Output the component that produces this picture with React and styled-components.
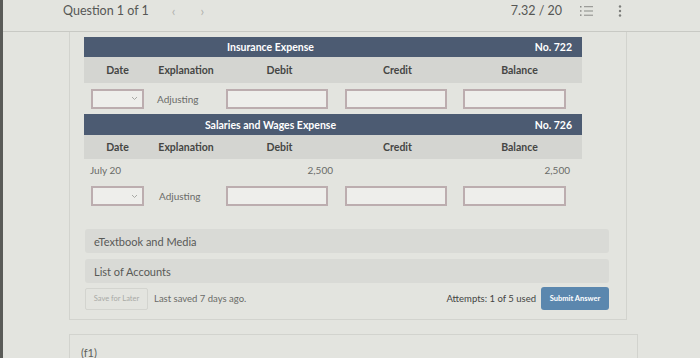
import React from 'react';
import styled, { createGlobalStyle } from 'styled-components';

const GlobalStyle = createGlobalStyle`
  html, body {
    margin: 0;
    padding: 0;
    background: #e3e4df;
    font-family: Lato, "Noto Sans", sans-serif;
  }
`;

const Page = styled.div`
  height: 358px;
  border-left: 3px solid #5a5b58;
  overflow: hidden;
`;

const TopBar = styled.div`
  box-sizing: border-box;
  height: 32px;
  padding-top: 3px;
  display: flex;
  align-items: flex-start;
  line-height: 16px;
  border-bottom: 1px solid #c8c9c4;
  color: #565755;
`;

const QuestionLabel = styled.div`
  margin-left: 60px;
  font-size: 12.5px;
`;

const NavArrows = styled.div`
  display: flex;
  gap: 25px;
  margin-left: 23px;
  font-size: 13px;
  color: #b0b1ad;
`;

const Spacer = styled.div`
  flex: 1;
`;

const Score = styled.div`
  font-size: 12.5px;
  margin-right: 18px;
`;

const IconSlot = styled.div`
  display: flex;
  align-items: center;
  height: 16px;
  margin-right: ${(p) => p.$gap}px;
`;

const Content = styled.div`
  padding-left: 66px;
`;

const Card = styled.div`
  width: 556px;
  border: 1px solid #d2d3ce;
  border-top: none;
  padding: 5px 0 9px 0;
`;

const CardInner = styled.div`
  padding: 0 17px 0 14px;
`;

const Ledger = styled.div`
  width: 498px;
`;

const cols = '67px 70px 117px 119px 125px';

const TitleBar = styled.div`
  display: grid;
  grid-template-columns: ${cols};
  height: ${(p) => p.$h}px;
  align-items: center;
  background: #4c5b72;
  color: #ffffff;
  font-size: 10.5px;
  font-weight: 700;
`;

const Title = styled.div`
  grid-column: 1 / 5;
  text-align: center;
`;

const AccountNo = styled.div`
  text-align: right;
  padding-right: 10px;
`;

const HeadRow = styled.div`
  display: grid;
  grid-template-columns: ${cols};
  height: ${(p) => p.$h}px;
  align-items: center;
  background: #d4d5d1;
  color: #454644;
  font-size: 10.5px;
  font-weight: 700;
`;

const HeadCell = styled.div`
  text-align: center;
`;

const Row = styled.div`
  display: grid;
  grid-template-columns: ${cols};
  height: ${(p) => p.$h}px;
  align-items: center;
  font-size: 10px;
  color: #6a6b68;
`;

const Cell = styled.div`
  text-align: ${(p) => p.$align || 'left'};
  padding-left: ${(p) => p.$pl || 0}px;
  padding-right: ${(p) => p.$pr || 0}px;
`;

const InputBox = styled.div`
  box-sizing: border-box;
  width: ${(p) => p.$w}px;
  height: 20px;
  margin-left: ${(p) => p.$ml}px;
  border: 2px solid #bcadaf;
  background: #eeeeeb;
  display: flex;
  align-items: center;
  justify-content: flex-end;
  padding-right: 4px;
`;

const Gap = styled.div`
  height: ${(p) => p.$h}px;
`;

const Panel = styled.div`
  height: 24px;
  margin: 0 0 6px 1px;
  padding-left: 9px;
  display: flex;
  align-items: center;
  background: #d9dad6;
  border-radius: 3px;
  font-size: 11px;
  color: #585956;
`;

const Footer = styled.div`
  display: flex;
  align-items: center;
  margin: -2px 0 0 1px;
  height: 23px;
`;

const SaveButton = styled.div`
  box-sizing: border-box;
  height: 22px;
  width: 63px;
  display: flex;
  align-items: center;
  justify-content: center;
  border: 1px solid #d3d4cf;
  border-radius: 2px;
  font-size: 7.5px;
  color: #a9aaa6;
`;

const SavedNote = styled.div`
  margin-left: 6px;
  font-size: 9.5px;
  color: #6a6b68;
`;

const Attempts = styled.div`
  font-size: 9.5px;
  color: #444543;
  margin-right: 5px;
`;

const SubmitButton = styled.div`
  height: 23px;
  width: 68px;
  display: flex;
  align-items: center;
  justify-content: center;
  background: #5b87ae;
  border-radius: 3px;
  color: #ffffff;
  font-size: 7.5px;
  font-weight: 700;
`;

const NextCard = styled.div`
  width: 556px;
  height: 30px;
  margin-top: 14px;
  border: 1px solid #d2d3ce;
  border-bottom: none;
  padding: 11px 0 0 11px;
  font-size: 11px;
  line-height: 13px;
  color: #5e5f5c;
`;

const Chevron = () => (
  <svg width="7" height="5" viewBox="0 0 7 5">
    <path d="M1 1 L3.5 3.5 L6 1" fill="none" stroke="#a8a9a5" strokeWidth="1" />
  </svg>
);

const ListIcon = () => (
  <svg width="14" height="12" viewBox="0 0 14 12">
    <g fill="#8a8b88">
      <rect x="0" y="1" width="1.5" height="1.5" />
      <rect x="0" y="5.2" width="1.5" height="1.5" />
      <rect x="0" y="9.4" width="1.5" height="1.5" />
      <rect x="4" y="1.2" width="9" height="1" />
      <rect x="4" y="5.5" width="9" height="1" />
      <rect x="4" y="9.7" width="9" height="1" />
    </g>
  </svg>
);

const DotsIcon = () => (
  <svg width="4" height="12" viewBox="0 0 4 12">
    <g fill="#7c7d7a">
      <circle cx="2" cy="1.5" r="1.2" />
      <circle cx="2" cy="6" r="1.2" />
      <circle cx="2" cy="10.5" r="1.2" />
    </g>
  </svg>
);

const InputRow = ({ h, explPad }) => (
  <Row $h={h}>
    <Cell>
      <InputBox $w={53} $ml={7}>
        <Chevron />
      </InputBox>
    </Cell>
    <Cell $pl={explPad}>Adjusting</Cell>
    <Cell>
      <InputBox $w={102} $ml={5} />
    </Cell>
    <Cell>
      <InputBox $w={102} $ml={7} />
    </Cell>
    <Cell>
      <InputBox $w={103} $ml={6} />
    </Cell>
  </Row>
);

const LedgerHead = ({ title, no, barH, headH }) => (
  <>
    <TitleBar $h={barH}>
      <Title>{title}</Title>
      <AccountNo>{no}</AccountNo>
    </TitleBar>
    <HeadRow $h={headH}>
      <HeadCell>Date</HeadCell>
      <HeadCell>Explanation</HeadCell>
      <HeadCell>Debit</HeadCell>
      <HeadCell>Credit</HeadCell>
      <HeadCell>Balance</HeadCell>
    </HeadRow>
  </>
);

export default function App() {
  return (
    <Page>
      <GlobalStyle />
      <TopBar>
        <QuestionLabel>Question 1 of 1</QuestionLabel>
        <NavArrows>
          <span>‹</span>
          <span>›</span>
        </NavArrows>
        <Spacer />
        <Score>7.32 / 20</Score>
        <IconSlot $gap={24}>
          <ListIcon />
        </IconSlot>
        <IconSlot $gap={78}>
          <DotsIcon />
        </IconSlot>
      </TopBar>
      <Content>
        <Card>
          <CardInner>
            <Ledger>
              <LedgerHead title="Insurance Expense" no="No. 722" barH={20} headH={26} />
              <InputRow h={31} explPad={6} />
            </Ledger>
            <Ledger>
              <LedgerHead title="Salaries and Wages Expense" no="No. 726" barH={21} headH={24} />
              <Row $h={22}>
                <Cell $pl={6}>July 20</Cell>
                <Cell />
                <Cell $align="right" $pr={5}>2,500</Cell>
                <Cell />
                <Cell $align="right" $pr={12}>2,500</Cell>
              </Row>
              <InputRow h={30} explPad={8} />
            </Ledger>
            <Gap $h={18} />
            <Panel>eTextbook and Media</Panel>
            <Panel>List of Accounts</Panel>
            <Footer>
              <SaveButton>Save for Later</SaveButton>
              <SavedNote>Last saved 7 days ago.</SavedNote>
              <Spacer />
              <Attempts>Attempts: 1 of 5 used</Attempts>
              <SubmitButton>Submit Answer</SubmitButton>
            </Footer>
          </CardInner>
        </Card>
        <NextCard>(f1)</NextCard>
      </Content>
    </Page>
  );
}
